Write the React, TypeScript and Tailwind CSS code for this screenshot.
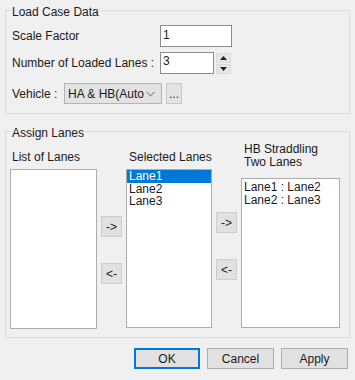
const selectedLanes = ["Lane1", "Lane2", "Lane3"];
const straddling = ["Lane1 : Lane2", "Lane2 : Lane3"];

function ArrowButton({ label, className }: { label: string; className?: string }) {
  return (
    <button
      className={
        "flex h-[21px] w-[21px] items-center justify-center border border-[#cdcdcd] bg-[#e1e1e1] text-[12px] leading-none text-[#222] " +
        (className ?? "")
      }
    >
      {label}
    </button>
  );
}

function DialogButton({ label, primary }: { label: string; primary?: boolean }) {
  return (
    <button
      className={
        "flex h-[21px] items-center justify-center bg-[#e1e1e1] text-[12px] text-[#1a1a1a] " +
        (primary ? "w-[66px] border-2 border-[#0078d7]" : "w-[67px] border border-[#adadad]")
      }
    >
      {label}
    </button>
  );
}

export default function App() {
  return (
    <div
      className="flex h-[380px] w-[355px] flex-col bg-[#f0f0f0] text-[12px] text-[#1a1a1a]"
      style={{ fontFamily: '"Liberation Sans", Arial, sans-serif' }}
    >
      {/* Load Case Data */}
      <fieldset className="mx-[5px] mt-[1px] border border-[#dcdcdc] pb-[9px]">
        <legend className="ml-[5px] px-[1px] pt-[4px] leading-[14px]">Load Case Data</legend>
        <div className="mt-[6px] flex flex-col pl-[6px]">
          <div className="flex h-[22px] items-center">
            <span className="w-[148px]">Scale Factor</span>
            <div className="h-[22px] w-[72px] border border-[#8c8c8c] bg-white px-[2px] pt-[2px] leading-[14px]">1</div>
          </div>
          <div className="mt-[5px] flex h-[22px] items-center">
            <span className="w-[148px]">Number of Loaded Lanes :</span>
            <div className="h-[22px] w-[54px] border border-[#8c8c8c] bg-white px-[2px] pt-[1px] leading-[14px]">3</div>
            <div className="ml-[2px] flex h-[21px] w-[15px] flex-col gap-[1px]">
              <div className="flex flex-1 items-center justify-center border border-[#dadada] bg-[#e6e6e6]">
                <svg width="7" height="4" viewBox="0 0 7 4">
                  <path d="M0 4 L3.5 0 L7 4 Z" fill="#222" />
                </svg>
              </div>
              <div className="flex flex-1 items-center justify-center border border-[#dadada] bg-[#e6e6e6]">
                <svg width="7" height="4" viewBox="0 0 7 4">
                  <path d="M0 0 L3.5 4 L7 0 Z" fill="#222" />
                </svg>
              </div>
            </div>
          </div>
          <div className="mt-[9px] flex h-[21px] items-center">
            <span className="w-[52px]">Vehicle :</span>
            <div className="flex h-[21px] w-[98px] items-center justify-between border border-[#b4b4b4] bg-[#e3e3e3] pl-[3px] pr-[6px]">
              <span>HA &amp; HB(Auto</span>
              <svg width="9" height="6" viewBox="0 0 9 6">
                <path d="M0.5 0.8 L4.5 4.8 L8.5 0.8" fill="none" stroke="#8a8a8a" strokeWidth="1.1" />
              </svg>
            </div>
            <div className="ml-[4px] flex h-[21px] w-[16px] items-end justify-center border border-[#c8c8c8] bg-[#e3e3e3] pb-[3px] leading-none">
              ...
            </div>
          </div>
        </div>
      </fieldset>

      {/* Assign Lanes */}
      <fieldset className="mx-[5px] mt-[8px] border border-[#dcdcdc] pb-[8px]">
        <legend className="ml-[5px] px-[1px] pt-[4px] leading-[14px]">Assign Lanes</legend>
        <div className="flex items-start pl-[4px]">
          <div className="flex flex-col pt-[10px]">
            <span className="ml-[2px] leading-[14px]">List of Lanes</span>
            <div className="mt-[5px] h-[160px] w-[87px] border border-[#adadad] bg-white" />
          </div>
          <div className="ml-[4px] flex flex-col pt-[76px]">
            <ArrowButton label="->" />
            <ArrowButton label="<-" className="mt-[26px]" />
          </div>
          <div className="ml-[4px] flex flex-col pt-[10px]">
            <span className="ml-[3px] leading-[14px]">Selected Lanes</span>
            <div className="mt-[5px] flex h-[159px] w-[86px] flex-col border border-[#adadad] bg-white">
              {selectedLanes.map((lane, i) => (
                <div
                  key={lane}
                  className={
                    "pl-[2px] leading-[12.5px] " + (i === 0 ? "bg-[#0078d7] text-white" : "text-[#1a1a1a]")
                  }
                >
                  {lane}
                </div>
              ))}
            </div>
          </div>
          <div className="ml-[4px] flex flex-col pt-[72px]">
            <ArrowButton label="->" />
            <ArrowButton label="<-" className="mt-[26px]" />
          </div>
          <div className="ml-[4px] flex flex-col pt-[3px]">
            <span className="ml-[3px] leading-[13px]">
              HB Straddling
              <br />
              Two Lanes
            </span>
            <div className="mt-[9px] flex h-[150px] w-[99px] flex-col border border-[#adadad] bg-white pl-[2px] pt-[2px]">
              {straddling.map((row) => (
                <div key={row} className="leading-[12.5px]">
                  {row}
                </div>
              ))}
            </div>
          </div>
        </div>
      </fieldset>

      <div className="mt-[10px] flex justify-end gap-[7px] pr-[7px]">
        <DialogButton label="OK" primary />
        <DialogButton label="Cancel" />
        <DialogButton label="Apply" />
      </div>
    </div>
  );
}
